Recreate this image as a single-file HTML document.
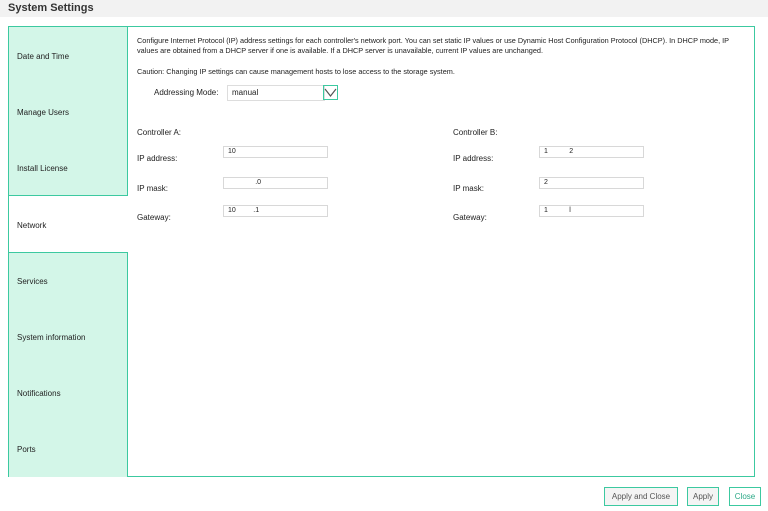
<!DOCTYPE html>
<html><head><style>
body{margin:0;width:768px;height:511px;background:#fff;font-family:"Liberation Sans",sans-serif;font-size:8px;color:#222;position:relative;overflow:hidden}
.hdr{position:absolute;left:0;top:0;width:768px;height:17px;background:#f2f2f2;font-weight:bold;font-size:11px;padding-left:8px;line-height:17px;box-sizing:border-box;color:#333}
.box{position:absolute;left:8px;top:26px;width:745px;height:449px;border:1px solid #3cc9a0;box-sizing:content-box}
.side{position:absolute;left:0;width:118px;background:#d3f6e8;border-right:1px solid #3cc9a0}
.it{position:absolute;left:8px;font-size:8px}
.t{position:absolute;font-size:8px}
.in{position:absolute;width:99px;height:10px;border:1px solid #d8d8d8;background:#fff;font-size:7px;line-height:10px;padding-left:4px;box-sizing:content-box}
.btn{position:absolute;top:487px;border:1px solid #3cc9a0;background:#f4f4f4;font-size:8px;line-height:17px;text-align:center;color:#555;box-sizing:border-box;height:19px}
</style></head><body>
<div class="hdr">System Settings</div>
<div class="box">
<div class="side" style="top:0;height:168px"></div>
<div style="position:absolute;left:0;top:168px;width:119px;border-top:1px solid #3cc9a0"></div>
<div class="side" style="top:225px;height:224px;border-top:1px solid #3cc9a0"></div>
<div class="it" style="top:25px">Date and Time</div>
<div class="it" style="top:81px">Manage Users</div>
<div class="it" style="top:137px">Install License</div>
<div class="it" style="top:194px">Network</div>
<div class="it" style="top:250px">Services</div>
<div class="it" style="top:306px">System information</div>
<div class="it" style="top:362px">Notifications</div>
<div class="it" style="top:418px">Ports</div>
</div>
<div class="t" style="left:137px;top:36px;width:600px;line-height:10px;font-size:7.3px">Configure Internet Protocol (IP) address settings for each controller's network port. You can set static IP values or use Dynamic Host Configuration Protocol (DHCP). In DHCP mode, IP values are obtained from a DHCP server if one is available. If a DHCP server is unavailable, current IP values are unchanged.</div>
<div class="t" style="left:137px;top:67px;font-size:7.3px">Caution: Changing IP settings can cause management hosts to lose access to the storage system.</div>
<div class="t" style="left:154px;top:88px">Addressing Mode:</div>
<div style="position:absolute;left:227px;top:85px;width:92px;height:14px;border:1px solid #ddd;font-size:8px;line-height:14px;padding-left:4px">manual</div>
<div style="position:absolute;left:323px;top:85px;width:15px;height:15px;border:1px solid #3cc9a0;box-sizing:border-box"><svg width="13" height="13" viewBox="0 0 13 13"><path d="M1 3 L6.5 10 L12 3" fill="none" stroke="#555" stroke-width="1.2"/></svg></div>
<div class="t" style="left:137px;top:128px">Controller A:</div>
<div class="t" style="left:137px;top:154px">IP address:</div>
<div class="t" style="left:137px;top:184px">IP mask:</div>
<div class="t" style="left:137px;top:213px">Gateway:</div>
<div class="in" style="left:223px;top:146px">10</div>
<div class="in" style="left:223px;top:177px">&nbsp;&nbsp;&nbsp;&nbsp;&nbsp;&nbsp;&nbsp;&nbsp;&nbsp;&nbsp;&nbsp;&nbsp;&nbsp;&nbsp;.0</div>
<div class="in" style="left:223px;top:205px">10&nbsp;&nbsp;&nbsp;&nbsp;&nbsp;&nbsp;&nbsp;&nbsp;&nbsp;.1</div>
<div class="t" style="left:453px;top:128px">Controller B:</div>
<div class="t" style="left:453px;top:154px">IP address:</div>
<div class="t" style="left:453px;top:184px">IP mask:</div>
<div class="t" style="left:453px;top:213px">Gateway:</div>
<div class="in" style="left:539px;top:146px">1&nbsp;&nbsp;&nbsp;&nbsp;&nbsp;&nbsp;&nbsp;&nbsp;&nbsp;&nbsp;&nbsp;2</div>
<div class="in" style="left:539px;top:177px">2</div>
<div class="in" style="left:539px;top:205px">1&nbsp;&nbsp;&nbsp;&nbsp;&nbsp;&nbsp;&nbsp;&nbsp;&nbsp;&nbsp;&nbsp;l</div>
<div class="btn" style="left:604px;width:74px">Apply and Close</div>
<div class="btn" style="left:687px;width:32px">Apply</div>
<div class="btn" style="left:729px;width:32px;background:#fff;color:#2aa886">Close</div>
</body></html>
